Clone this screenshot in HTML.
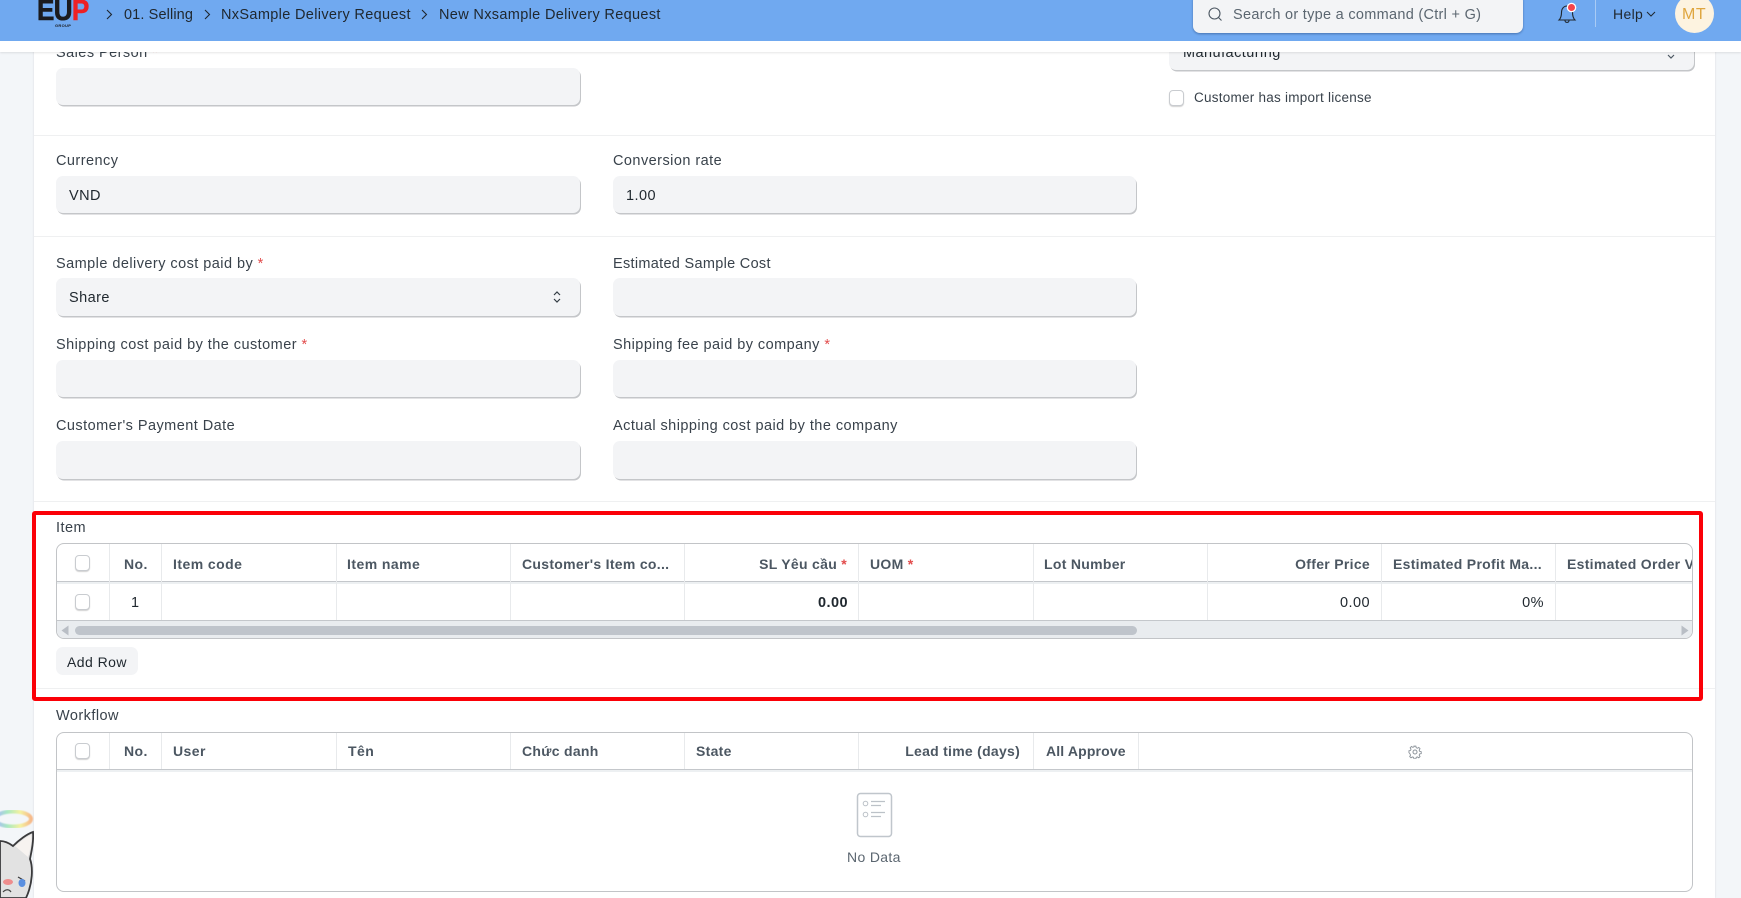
<!DOCTYPE html>
<html lang="en"><head><meta charset="utf-8"><title>New Nxsample Delivery Request</title>
<style>
*{box-sizing:border-box}
html,body{margin:0;padding:0}
body{width:1741px;height:898px;overflow:hidden;position:relative;background:#f3f6f9;font-family:"Liberation Sans","Noto Sans CJK SC",sans-serif;color:#333c44}
.a{position:absolute}
.t{position:absolute;white-space:nowrap;line-height:20px;height:20px;margin-top:1px;font-size:14.5px;letter-spacing:.45px;color:#39424b}
.r{text-align:right}
.star{color:#e24c4c}
.card{position:absolute;left:34px;top:0;width:1681px;height:898px;background:#fff;box-shadow:0 0 2px rgba(0,0,0,.12)}
.f{position:absolute;background:#f3f4f6;border-radius:7px;box-shadow:1px 1.5px 0 #c4c6c9}
.sep{position:absolute;left:34px;width:1681px;height:1px;background:#eff0f1}
.grid{position:absolute;left:56px;width:1637px;border:1px solid #c2c4c7;border-radius:8px;background:#fff;overflow:hidden}
.v{position:absolute;width:1px;background:#e8eaec}
.h{position:absolute;left:0;right:0;height:1px;background:#c4c7cb}
.t.th{margin-top:0;font-weight:bold;color:#4c5762;font-size:14px;letter-spacing:.3px}
.t.w{letter-spacing:.45px}
.cb{position:absolute;width:15px;height:16px;background:#fff;border:1px solid #c9ccd0;border-radius:4px;box-shadow:0 1px 1px rgba(0,0,0,.18)}
.t.bc{color:#1f272e;font-size:14.5px;letter-spacing:.34px}
</style></head><body>

<div class="card"></div>

<!-- top form rows -->
<div class="t" style="left:56px;top:42px">Sales Person <span class="star">*</span></div>
<div class="f" style="left:56px;top:68px;width:524px;height:37px"></div>
<div class="f" style="left:1169px;top:34px;width:525px;height:36px"></div>
<div class="t" style="left:1183px;top:42px;color:#1f272e">Manufacturing</div>
<svg class="a" style="left:1666px;top:53px" width="10" height="8" viewBox="0 0 10 8"><path d="M2 2l3 3 3-3" fill="none" stroke="#4c5762" stroke-width="1.2"/></svg>
<div class="cb" style="left:1169px;top:90px"></div>
<div class="t" style="left:1194px;top:87px;font-size:13.5px;letter-spacing:.25px">Customer has import license</div>
<div class="sep" style="top:135px"></div>

<div class="t" style="left:56px;top:150px">Currency</div>
<div class="t" style="left:613px;top:150px">Conversion rate</div>
<div class="f" style="left:56px;top:176px;width:524px;height:37px"></div>
<div class="f" style="left:613px;top:176px;width:523px;height:37px"></div>
<div class="t" style="left:69px;top:185px;color:#1f272e">VND</div>
<div class="t" style="left:626px;top:185px;color:#1f272e">1.00</div>
<div class="sep" style="top:236px"></div>

<div class="t" style="left:56px;top:253px">Sample delivery cost paid by <span class="star">*</span></div>
<div class="t" style="left:613px;top:253px;letter-spacing:.3px">Estimated Sample Cost</div>
<div class="f" style="left:56px;top:278px;width:524px;height:38px"></div>
<div class="f" style="left:613px;top:278px;width:523px;height:38px"></div>
<div class="t" style="left:69px;top:287px;color:#1f272e">Share</div>
<svg class="a" style="left:551px;top:289px" width="12" height="16" viewBox="0 0 12 16"><path d="M3 6l3-3 3 3M3 10l3 3 3-3" fill="none" stroke="#333c44" stroke-width="1.2"/></svg>

<div class="t" style="left:56px;top:334px">Shipping cost paid by the customer <span class="star">*</span></div>
<div class="t" style="left:613px;top:334px">Shipping fee paid by company <span class="star">*</span></div>
<div class="f" style="left:56px;top:360px;width:524px;height:37px"></div>
<div class="f" style="left:613px;top:360px;width:523px;height:37px"></div>

<div class="t" style="left:56px;top:415px">Customer's Payment Date</div>
<div class="t" style="left:613px;top:415px">Actual shipping cost paid by the company</div>
<div class="f" style="left:56px;top:441px;width:524px;height:38px"></div>
<div class="f" style="left:613px;top:441px;width:523px;height:38px"></div>
<div class="sep" style="top:501px"></div>

<!-- Item table -->
<div class="t" style="left:56px;top:517px">Item</div>
<div class="grid" style="top:543px;height:96px">
  <div class="h" style="top:37px;background:#c4c7cb"></div>
  <div class="a" style="left:0;right:0;top:38px;height:2px;background:#edf0f2"></div>
  <div class="h" style="top:76px"></div>
  <div class="a" style="left:0;right:0;top:77px;height:18px;background:#e9ecef"></div>
  <div class="v" style="left:52px;top:0;height:76px"></div>
  <div class="v" style="left:104px;top:0;height:76px"></div>
  <div class="v" style="left:279px;top:0;height:76px"></div>
  <div class="v" style="left:453px;top:0;height:76px"></div>
  <div class="v" style="left:627px;top:0;height:76px"></div>
  <div class="v" style="left:801px;top:0;height:76px"></div>
  <div class="v" style="left:976px;top:0;height:76px"></div>
  <div class="v" style="left:1150px;top:0;height:76px"></div>
  <div class="v" style="left:1324px;top:0;height:76px"></div>
  <div class="v" style="left:1498px;top:0;height:76px"></div>
  <div class="a" style="left:18px;top:82px;width:1062px;height:9px;background:#bfc4cb;border-radius:5px"></div>
  <svg class="a" style="left:3px;top:81px" width="10" height="11" viewBox="0 0 10 11"><path d="M8.500 .5v10L1.500 5.500z" fill="#b9bec5"/></svg>
  <svg class="a" style="left:1623px;top:81px" width="10" height="11" viewBox="0 0 10 11"><path d="M1.500 .5v10l7-5z" fill="#b9bec5"/></svg>
  <div class="t th" style="left:1510px;top:10px">Estimated Order V</div>
</div>
<div class="cb" style="left:75px;top:555px"></div>
<div class="cb" style="left:75px;top:594px"></div>
<div class="t th w" style="left:124px;top:554px">No.</div>
<div class="t th w" style="left:173px;top:554px">Item code</div>
<div class="t th w" style="left:347px;top:554px">Item name</div>
<div class="t th" style="left:522px;top:554px">Customer's Item co...</div>
<div class="t th r" style="left:700px;width:147px;top:554px">SL Yêu cầu <span class="star">*</span></div>
<div class="t th" style="left:870px;top:554px">UOM <span class="star">*</span></div>
<div class="t th" style="left:1044px;top:554px">Lot Number</div>
<div class="t th r" style="left:1220px;width:150px;top:554px">Offer Price</div>
<div class="t th" style="left:1393px;top:554px">Estimated Profit Ma...</div>
<div class="t" style="left:131px;top:592px;color:#1f272e">1</div>
<div class="t r" style="left:760px;width:88px;top:592px;font-weight:bold;color:#1f272e">0.00</div>
<div class="t r" style="left:1300px;width:70px;top:592px;color:#1f272e">0.00</div>
<div class="t r" style="left:1480px;width:64px;top:592px;color:#1f272e">0%</div>
<div class="a" style="left:56px;top:647px;width:82px;height:28px;background:#f3f4f6;border-radius:7px"></div>
<div class="t" style="left:67px;top:651px;font-size:14px;letter-spacing:.45px;color:#1f272e">Add Row</div>
<div class="sep" style="top:688px"></div>

<!-- Red highlight -->
<div class="a" style="left:32px;top:511px;width:1671px;height:190px;border:4px solid #fb0007;border-radius:3px"></div>

<!-- Workflow table -->
<div class="t" style="left:56px;top:705px">Workflow</div>
<div class="grid" style="top:732px;height:160px">
  <div class="h" style="top:36px"></div>
  <div class="a" style="left:0;right:0;top:37px;height:2px;background:#edf0f2"></div>
  <div class="v" style="left:52px;top:0;height:36px"></div>
  <div class="v" style="left:104px;top:0;height:36px"></div>
  <div class="v" style="left:279px;top:0;height:36px"></div>
  <div class="v" style="left:453px;top:0;height:36px"></div>
  <div class="v" style="left:627px;top:0;height:36px"></div>
  <div class="v" style="left:801px;top:0;height:36px"></div>
  <div class="v" style="left:976px;top:0;height:36px"></div>
  <div class="v" style="left:1081px;top:0;height:36px"></div>
</div>
<div class="cb" style="left:75px;top:743px"></div>
<div class="t th w" style="left:124px;top:741px">No.</div>
<div class="t th w" style="left:173px;top:741px">User</div>
<div class="t th w" style="left:348px;top:741px">Tên</div>
<div class="t th" style="left:522px;top:741px">Chức danh</div>
<div class="t th" style="left:696px;top:741px">State</div>
<div class="t th r" style="left:860px;width:160px;top:741px;letter-spacing:.27px">Lead time (days)</div>
<div class="t th" style="left:1046px;top:741px;letter-spacing:.15px">All Approve</div>
<svg class="a" style="left:1408px;top:745px" width="14" height="14" viewBox="0 0 14 14" fill="none" stroke="#8d949b" stroke-width="1"><circle cx="7" cy="7" r="2"/><path d="M6 1h2l.4 1.700 1.300.6 1.500-.9 1.300 1.400-.9 1.500.5 1.300 1.700.4v2l-1.700.4-.5 1.300.9 1.500-1.300 1.300-1.500-.9-1.300.5-.4 1.700H6l-.4-1.700-1.300-.5-1.500.9-1.400-1.300.9-1.500-.5-1.300L.6 8V6l1.700-.4.5-1.300-.9-1.500L3.300 1.400l1.500.9 1.300-.6z" transform="translate(.4 .2) scale(.93)"/></svg>
<svg class="a" style="left:856px;top:792px" width="37" height="46" viewBox="0 0 37 46" fill="none"><rect x="1.500" y="1.500" width="34" height="43" rx="3" stroke="#c0c6cc" stroke-width="1.500"/><circle cx="9.500" cy="11.500" r="2.300" stroke="#bcc2c8"/><circle cx="9.500" cy="22.500" r="2.300" stroke="#bcc2c8"/><path d="M15 9.500h14M15 13.500h10M15 20.500h14M15 24.500h10" stroke="#bcc2c8" stroke-width="1.200"/></svg>
<div class="t" style="left:847px;top:846px;font-size:14px;letter-spacing:.35px;color:#5b6670">No Data</div>

<!-- Mascot -->
<svg class="a" style="left:0;top:805px" width="34" height="93" viewBox="0 0 34 93">
  <defs><linearGradient id="rb" x1="0" x2="1"><stop offset="0" stop-color="#a9b6ff"/><stop offset=".35" stop-color="#a8e9c0"/><stop offset=".7" stop-color="#f4f2a0"/><stop offset="1" stop-color="#f7b98a"/></linearGradient><filter id="bl"><feGaussianBlur stdDeviation=".6"/></filter></defs>
  <ellipse cx="13" cy="14" rx="18" ry="7.500" fill="none" stroke="url(#rb)" stroke-width="4" filter="url(#bl)"/>
  <path d="M13 41C19 35 27 29 33 27C34 38 31 48 30 54C33 62 33 78 26 93H0V36C5 36 9 38 13 41Z" fill="#e2e2e2" stroke="#3a3a3c" stroke-width="1.800"/>
  <path d="M15 41C20 37 26 32 31 30C32 37 30 46 28 52Z" fill="#f7f3f0"/>
  <ellipse cx="8" cy="77" rx="5" ry="3" fill="#ee8d8d"/>
  <path d="M18 72l7 4" stroke="#3a3a3c" stroke-width="1.200"/>
  <ellipse cx="22" cy="78" rx="3.500" ry="4" fill="#5a8fe0"/>
  <path d="M3 87c3-3 6-3 8 0" stroke="#444" fill="none" stroke-width="1.200"/>
</svg>

<!-- Header -->
<div class="a" style="left:0;top:41px;width:1741px;height:11px;background:#fff;box-shadow:0 1px 2px rgba(0,0,0,.1)"></div>
<div class="a" style="left:0;top:0;width:1741px;height:41px;background:#70a9f0"></div>
<div class="a" style="left:37px;top:-1px;font:900 29px/24px 'Liberation Sans',sans-serif;color:#1b1b1e;letter-spacing:-.8px;-webkit-text-stroke:.6px #1b1b1e;transform:scaleX(.9);transform-origin:left;white-space:nowrap">EU<span style="color:#ed2024;-webkit-text-stroke:.6px #ed2024">P</span></div>
<div class="a" style="left:55px;top:23px;font:bold 4px/5px 'Liberation Sans',sans-serif;color:#1b1b1e;letter-spacing:.3px">GROUP</div>
<svg class="a" style="left:104px;top:8px" width="10" height="13" viewBox="0 0 10 13"><path d="M3 2l4.500 4.500L3 11" fill="none" stroke="#1f272e" stroke-width="1.100"/></svg>
<svg class="a" style="left:202px;top:8px" width="10" height="13" viewBox="0 0 10 13"><path d="M3 2l4.500 4.500L3 11" fill="none" stroke="#1f272e" stroke-width="1.100"/></svg>
<svg class="a" style="left:419px;top:8px" width="10" height="13" viewBox="0 0 10 13"><path d="M3 2l4.500 4.500L3 11" fill="none" stroke="#1f272e" stroke-width="1.100"/></svg>
<div class="t bc" style="left:124px;top:4px;letter-spacing:.12px">01. Selling</div>
<div class="t bc" style="left:221px;top:4px">NxSample Delivery Request</div>
<div class="t bc" style="left:439px;top:4px">New Nxsample Delivery Request</div>

<div class="a" style="left:1193px;top:-6px;width:330px;height:39px;background:#f3f4f6;border-radius:7px;box-shadow:0 1px 2px rgba(20,50,100,.45)"></div>
<svg class="a" style="left:1207px;top:6px" width="16" height="16" viewBox="0 0 16 16" fill="none" stroke="#4c5762" stroke-width="1.100"><circle cx="7.500" cy="7.500" r="5.500"/><path d="M11.500 11.500l3 3"/></svg>
<div class="t" style="left:1233px;top:4px;font-size:14.500px;letter-spacing:.29px;color:#5b6670">Search or type a command (Ctrl + G)</div>

<svg class="a" style="left:1557px;top:2px" width="20" height="23" viewBox="0 0 20 23" fill="none" stroke="#1f272e" stroke-width="1.100"><path d="M2 18c2-2 2.500-4 2.500-7.500C4.500 6.500 7 4 10 4s5.500 2.500 5.500 6.500c0 3.500.5 5.500 2.500 7.500z"/><path d="M8 18.500c0 2.500 4 2.500 4 0"/></svg>
<div class="a" style="left:1568px;top:4px;width:7px;height:7px;border-radius:50%;background:#f5454d;box-shadow:0 0 0 1.300px #fff"></div>
<div class="a" style="left:1595px;top:0;width:1px;height:27px;background:#a9cbf5"></div>
<div class="t" style="left:1613px;top:3px;font-size:14px;letter-spacing:.35px;color:#1f272e">Help</div>
<svg class="a" style="left:1646px;top:10px" width="10" height="8" viewBox="0 0 10 8"><path d="M1 2l4 4 4-4" fill="none" stroke="#1f272e" stroke-width="1"/></svg>
<div class="a" style="left:1675px;top:-6px;width:39px;height:39px;border-radius:50%;background:#fdf3e0"></div>
<div class="t" style="left:1682px;top:4px;font-size:16px;letter-spacing:.6px;color:#dfa63f">MT</div>
</body></html>
